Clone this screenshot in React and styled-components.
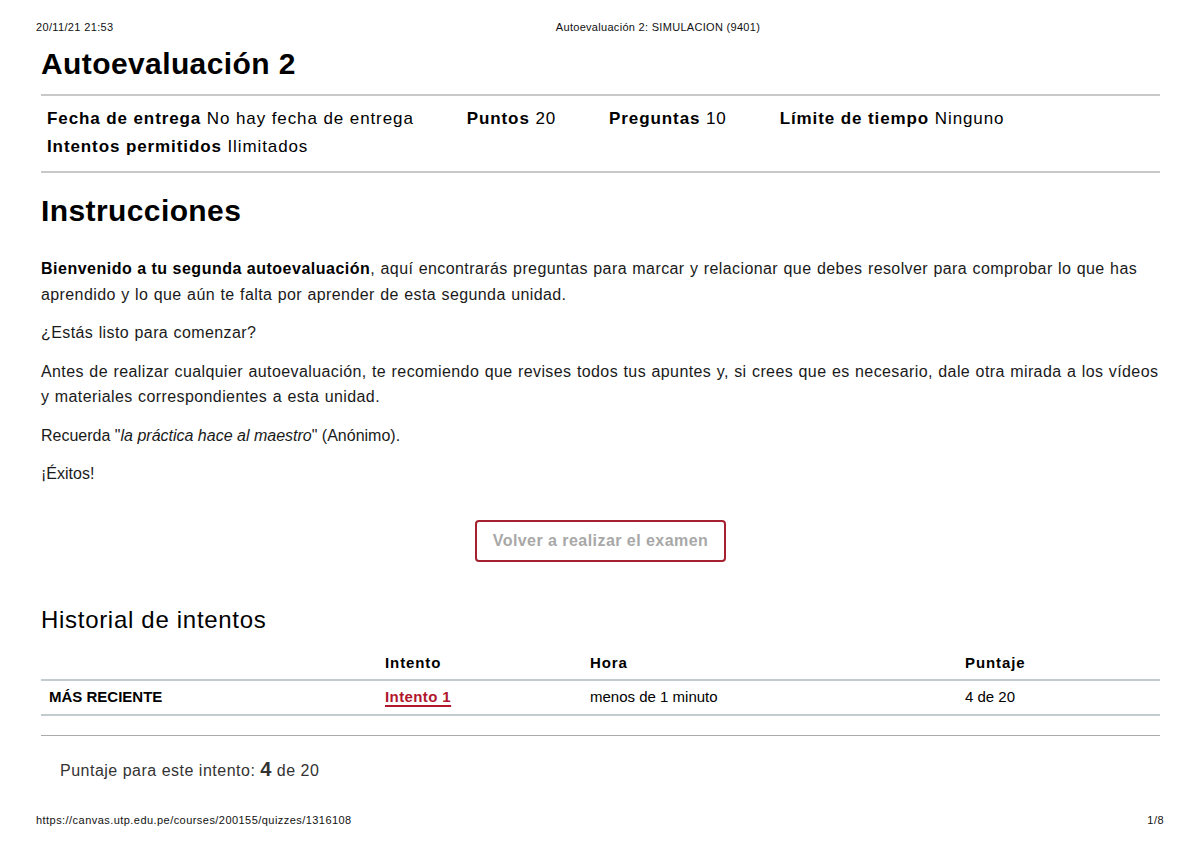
import React from "react";
import styled, { createGlobalStyle } from "styled-components";

const GlobalStyle = createGlobalStyle`
  html, body {
    margin: 0;
    padding: 0;
    background: #fff;
  }
  body {
    font-family: "Liberation Sans", Arial, sans-serif;
    color: #000;
  }
`;

const Page = styled.div`
  width: 1200px;
  height: 848px;
  box-sizing: border-box;
  padding: 20px 36px 0 36px;
  display: flex;
  flex-direction: column;
`;

const PrintBar = styled.div`
  display: grid;
  grid-template-columns: 1fr auto 1fr;
  font-size: 11px;
  letter-spacing: 0.35px;
  color: #111;
  height: 14px;
  line-height: 14px;
  span:last-child {
    text-align: right;
  }
`;

const PrintTitle = styled.span`
  padding-left: 116px;
  letter-spacing: 0.3px;
`;

const Content = styled.div`
  padding: 0 4px 0 5px;
  flex: 1;
`;

const Title = styled.h1`
  font-size: 30px;
  font-weight: bold;
  letter-spacing: 0.4px;
  margin: 11px 0 0;
  line-height: 38px;
`;

const Rule = styled.hr`
  border: none;
  border-top: ${(p) => p.$thick || 2}px solid ${(p) => p.$color || "#c8c8c8"};
  margin: ${(p) => p.$top || 0}px 0 0;
`;

const Details = styled.div`
  display: flex;
  flex-wrap: wrap;
  column-gap: 53px;
  padding: 9px 6px 10px;
  font-size: 17px;
  letter-spacing: 0.9px;
  line-height: 28px;
`;

const Detail = styled.div`
  white-space: nowrap;
`;

const SectionTitle = styled.h2`
  font-size: 30px;
  font-weight: bold;
  letter-spacing: 0.4px;
  margin: 18px 0 25px;
  line-height: 40px;
`;

const Para = styled.p`
  font-size: 16px;
  line-height: 25.5px;
  margin: 0 0 13px;
  color: #1a1a1a;
  letter-spacing: ${(p) => (p.$plain ? 0 : 0.4)}px;
  word-spacing: ${(p) => (p.$plain ? 0 : 0.6)}px;
  b {
    color: #000;
    letter-spacing: 0.5px;
    word-spacing: 0;
  }
`;

const ButtonRow = styled.div`
  display: flex;
  justify-content: center;
  margin-top: 33px;
`;

const RetakeButton = styled.button`
  width: 251px;
  height: 42px;
  border: 2px solid #a6212f;
  border-radius: 4px;
  background: #fff;
  color: #a8a8a8;
  font-family: "Liberation Sans", Arial, sans-serif;
  font-size: 16px;
  font-weight: bold;
  letter-spacing: 0.45px;
`;

const HistoryTitle = styled.h3`
  font-size: 24px;
  font-weight: normal;
  letter-spacing: 0.7px;
  margin: 43px 0 11px;
  line-height: 30px;
`;

const Table = styled.table`
  width: 100%;
  border-collapse: collapse;
  font-size: 15px;
`;

const Th = styled.th`
  text-align: left;
  font-weight: bold;
  letter-spacing: 0.9px;
  padding: 8px 0 7px;
  border-bottom: 2px solid #c4cbcf;
  width: ${(p) => p.$w}px;
  line-height: 18px;
`;

const Td = styled.td`
  padding: 7px 0 8px ${(p) => p.$pad || 0}px;
  border-bottom: 2px solid #c4cbcf;
  font-weight: ${(p) => (p.$bold ? "bold" : "normal")};
  line-height: 18px;
`;

const AttemptLink = styled.a`
  color: #b0172d;
  font-weight: bold;
  letter-spacing: 0.4px;
  text-decoration: underline;
  text-decoration-thickness: 2px;
  text-underline-offset: 3px;
`;

const Spacer = styled.div`
  height: 19px;
`;

const ScoreLine = styled.div`
  font-size: 16px;
  letter-spacing: 0.5px;
  color: #333;
  padding: 22px 0 0 19px;
  b {
    font-size: 20px;
    color: #333;
  }
`;

const Footer = styled(PrintBar)`
  margin-bottom: 21px;
  grid-template-columns: 1fr 1fr;
  letter-spacing: 0.45px;
`;

export default function App() {
  return (
    <>
      <GlobalStyle />
      <Page>
        <PrintBar>
          <span>20/11/21 21:53</span>
          <PrintTitle>Autoevaluación 2: SIMULACION (9401)</PrintTitle>
          <span />
        </PrintBar>
        <Content>
          <Title>Autoevaluación 2</Title>
          <Rule $thick={2} $top={11} />
          <Details>
            <Detail>
              <b>Fecha de entrega</b> No hay fecha de entrega
            </Detail>
            <Detail>
              <b>Puntos</b> 20
            </Detail>
            <Detail>
              <b>Preguntas</b> 10
            </Detail>
            <Detail>
              <b>Límite de tiempo</b> Ninguno
            </Detail>
            <Detail>
              <b>Intentos permitidos</b> Ilimitados
            </Detail>
          </Details>
          <Rule $thick={2} />
          <SectionTitle>Instrucciones</SectionTitle>
          <Para>
            <b>Bienvenido a tu segunda autoevaluación</b>, aquí encontrarás
            preguntas para marcar y relacionar que debes resolver para
            comprobar lo que has aprendido y lo que aún te falta por aprender
            de esta segunda unidad.
          </Para>
          <Para>¿Estás listo para comenzar?</Para>
          <Para>
            Antes de realizar cualquier autoevaluación, te recomiendo que
            revises todos tus apuntes y, si crees que es necesario, dale otra
            mirada a los vídeos y materiales correspondientes a esta unidad.
          </Para>
          <Para $plain>
            Recuerda "<i>la práctica hace al maestro</i>" (Anónimo).
          </Para>
          <Para $plain>¡Éxitos!</Para>
          <ButtonRow>
            <RetakeButton>Volver a realizar el examen</RetakeButton>
          </ButtonRow>
          <HistoryTitle>Historial de intentos</HistoryTitle>
          <Table>
            <thead>
              <tr>
                <Th $w={344} />
                <Th $w={205}>Intento</Th>
                <Th $w={375}>Hora</Th>
                <Th>Puntaje</Th>
              </tr>
            </thead>
            <tbody>
              <tr>
                <Td $bold $pad={8}>
                  MÁS RECIENTE
                </Td>
                <Td>
                  <AttemptLink href="#">Intento 1 </AttemptLink>
                </Td>
                <Td>menos de 1 minuto</Td>
                <Td>4 de 20</Td>
              </tr>
            </tbody>
          </Table>
          <Spacer />
          <Rule $thick={1} $color="#aaa" />
          <ScoreLine>
            Puntaje para este intento: <b>4</b> de 20
          </ScoreLine>
        </Content>
        <Footer>
          <span>https://canvas.utp.edu.pe/courses/200155/quizzes/1316108</span>
          <span>1/8</span>
        </Footer>
      </Page>
    </>
  );
}
